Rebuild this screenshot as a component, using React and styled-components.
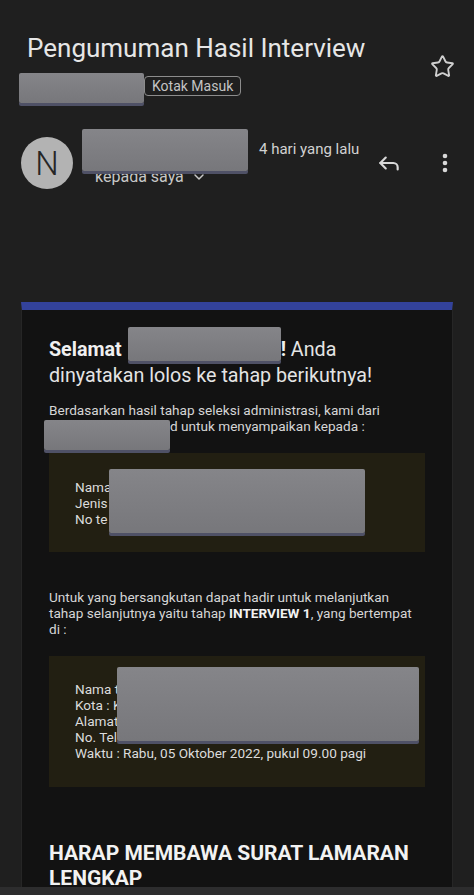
import styled, { createGlobalStyle } from 'styled-components'
import { Star, Reply, ChevronDown } from 'lucide-react'

const GlobalStyle = createGlobalStyle`
    body{
        margin:0;
        background:#1f1f1f;
        font-family:Roboto, 'Liberation Sans', sans-serif;
    }
`

const Page = styled.div`
    height:895px;
    display:grid;
    grid-template-rows:1fr 8px;
    overflow:hidden;
    background:#1f1f1f;
`

const Scroll = styled.div`
    overflow:hidden;
`

const BottomBar = styled.div`
    background:#2d2d2e;
`

const Header = styled.header`
    padding:33px 17px 0 21px;
`

const TitleRow = styled.div`
    display:flex;
    justify-content:space-between;
    align-items:flex-start;
    color:#e6e6e6;
    h1{
        margin:0 0 0 6px;
        font-weight:400;
        font-size:26px;
        line-height:30px;
    }
    svg{
        margin:21px 2px -20px 0;
    }
`

const LabelRow = styled.div`
    display:flex;
    align-items:center;
    margin:10px 0 0 -2px;
`

const Redacted = styled.span`
    display:inline-block;
    width:${p => p.$w}px;
    height:${p => p.$h}px;
    background:linear-gradient(#858589, #77777b);
    border-radius:2px;
    box-shadow:0 3px 0 #4f5166;
`

const Chip = styled.span`
    height:20px;
    padding:0 7px;
    border:1px solid #8c8c8c;
    border-radius:4px;
    font-size:14px;
    line-height:18px;
    color:#c4c4c4;
    box-sizing:border-box;
    margin-top:-4px;
`

const SenderRow = styled.div`
    display:flex;
    align-items:center;
    margin-top:34px;
`

const Avatar = styled.div`
    width:52px;
    height:52px;
    border-radius:50%;
    background:#b3b3b3;
    color:#262626;
    display:flex;
    align-items:center;
    justify-content:center;
    font-size:33px;
    font-weight:300;
    flex:none;
`

const SenderInfo = styled.div`
    flex:1;
    margin-left:22px;
    display:flex;
    flex-direction:column;
`

const NameLine = styled.div`
    display:flex;
    align-items:flex-start;
    ${Redacted}{
        margin:-10px 0 -16px -13px;
        position:relative;
        z-index:1;
    }
`

const Time = styled.span`
    margin-left:11px;
    font-size:15px;
    line-height:20px;
    color:#d2d2d2;
`

const Recipient = styled.div`
    display:flex;
    align-items:center;
    gap:7px;
    margin-top:8px;
    font-size:16px;
    line-height:20px;
    color:#c8c8c8;
`

const Actions = styled.div`
    display:flex;
    align-items:center;
    gap:31px;
    color:#d8d8d8;
`

const Card = styled.div`
    margin:113px 21px 0;
    background:#121212;
    border:1px solid #262626;
    border-top:8px solid #33429a;
    padding:27px 27px 40px;
`

const Headline = styled.h2`
    margin:0;
    font-size:19.7px;
    line-height:26px;
    font-weight:400;
    color:#e4e4e4;
    b{
        color:#f0f0f0;
    }
    ${Redacted}{
        vertical-align:top;
        margin:-10px 0 -1px 1px;
    }
`

const Text = styled.p`
    margin:${p => p.$top}px 0 0;
    font-size:13.6px;
    line-height:16px;
    color:#d6d6d6;
    b{
        color:#f2f2f2;
    }
    ${Redacted}{
        vertical-align:top;
        margin:2px 0 -18px -5px;
    }
`

const InfoBox = styled.div`
    position:relative;
    margin-top:19px;
    background:#221f12;
    padding:${p => p.$pad};
    font-size:13.6px;
    line-height:16px;
    color:#dcdcdc;
`

const Cover = styled(Redacted)`
    position:absolute;
    left:${p => p.$x}px;
    top:${p => p.$y}px;
`

const Notice = styled.h3`
    margin:54px 0 0;
    font-size:21px;
    line-height:25px;
    font-weight:700;
    color:#f2f2f2;
`

const Dots = () => (
    <svg width="24" height="24" viewBox="0 0 24 24" fill="currentColor">
        <circle cx="12" cy="5" r="2.3" />
        <circle cx="12" cy="12" r="2.3" />
        <circle cx="12" cy="19" r="2.3" />
    </svg>
)

const App = () => {
    return (
        <Page>
            <GlobalStyle />
            <Scroll>
                <Header>
                    <TitleRow>
                        <h1>Pengumuman Hasil Interview</h1>
                        <Star size={25} strokeWidth={1.8} color="#cfcfcf" />
                    </TitleRow>
                    <LabelRow>
                        <Redacted $w={125} $h={30} />
                        <Chip>Kotak Masuk</Chip>
                    </LabelRow>
                    <SenderRow>
                        <Avatar>N</Avatar>
                        <SenderInfo>
                            <NameLine>
                                <Redacted $w={166} $h={42} />
                                <Time>4 hari yang lalu</Time>
                            </NameLine>
                            <Recipient>
                                kepada saya
                                <ChevronDown size={16} strokeWidth={2.2} />
                            </Recipient>
                        </SenderInfo>
                        <Actions>
                            <Reply size={26} strokeWidth={2} />
                            <Dots />
                        </Actions>
                    </SenderRow>
                </Header>

                <Card>
                    <Headline>
                        <b>Selamat </b>
                        <Redacted $w={153} $h={34} />
                        <b>!</b> Anda dinyatakan lolos ke tahap berikutnya!
                    </Headline>
                    <Text $top={13}>
                        Berdasarkan hasil tahap seleksi administrasi, kami dari
                        <br />
                        <Redacted $w={126} $h={30} />d untuk menyampaikan kepada :
                    </Text>
                    <InfoBox $pad="26px 26px 25px">
                        Nama<br />
                        Jenis<br />
                        No te
                        <Cover $w={256} $h={64} $x={60} $y={16} />
                    </InfoBox>
                    <Text $top={37}>
                        Untuk yang bersangkutan dapat hadir untuk melanjutkan tahap selanjutnya yaitu tahap <b>INTERVIEW 1</b>, yang bertempat di :
                    </Text>
                    <InfoBox $pad="25px 26px 26px">
                        Nama t<br />
                        Kota : K<br />
                        Alamat<br />
                        No. Tel<br />
                        Waktu : Rabu, 05 Oktober 2022, pukul 09.00 pagi
                        <Cover $w={302} $h={74} $x={68} $y={11} />
                    </InfoBox>
                    <Notice>HARAP MEMBAWA SURAT LAMARAN LENGKAP</Notice>
                </Card>
            </Scroll>
            <BottomBar />
        </Page>
    )
}

export default App
